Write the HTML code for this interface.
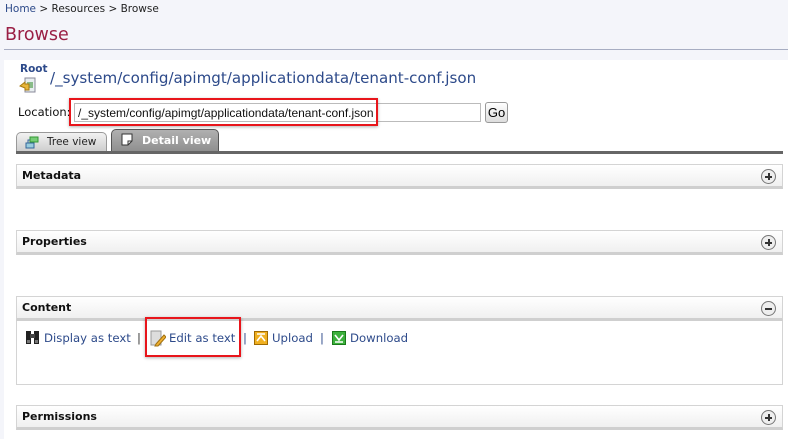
<!DOCTYPE html>
<html><head><meta charset="utf-8"><style>
*{margin:0;padding:0;box-sizing:border-box}
body{width:788px;height:439px;overflow:hidden;background:#f4f5fa;font-family:"DejaVu Sans","Liberation Sans",sans-serif;position:relative}
.a{position:absolute;white-space:nowrap}
.hd{position:absolute;left:16px;width:767px;height:25px;border:1px solid #d4d4d4;background:linear-gradient(#fff,#f0f0f0);border-bottom:3px solid #cfcfcf}
.hd b{position:absolute;left:5px;top:4px;font-size:11px;color:#111}
.pm{position:absolute;right:6px;top:4px;width:15px;height:15px;border:1px solid #777;border-radius:50%;background:#eee}
.pm:before{content:"";position:absolute;left:3px;top:6px;width:7px;height:2px;background:#333}
.pm.p:after{content:"";position:absolute;left:6px;top:3px;width:2px;height:7px;background:#333}
.lk{color:#2d4a8a;font-size:11.7px}
</style></head><body>
<div class="a" style="left:5px;top:3px;font-size:10.5px;color:#222"><span style="color:#2d4a8a">Home</span> &gt; Resources &gt; Browse</div>
<div class="a" style="left:5px;top:25px;font-size:17.5px;color:#9a1f45">Browse</div>
<div class="a" style="left:4px;top:49px;width:784px;height:1px;background:#a7adc2"></div>
<div class="a" style="left:4px;top:60px;width:784px;height:379px;background:#fff"></div>
<div class="a" style="left:20px;top:63px;font-size:10.5px;font-weight:bold;color:#2d4a8a">Root</div>
<svg class="a" style="left:19px;top:77px" width="17" height="17"><rect x="6" y="1" width="10" height="14" fill="#e8eef0" stroke="#889"/><rect x="8" y="5" width="6" height="6" fill="#8b8"/><path d="M1 9 L6 5 L6 7 L10 7 L10 13 L6 13 L6 11 Z" fill="#e8b73a" stroke="#a77a10"/></svg>
<div class="a" style="left:50px;top:69px;font-size:15.1px;color:#2d4a8a">/_system/config/apimgt/applicationdata/tenant-conf.json</div>
<div class="a" style="left:18px;top:105px;font-size:11.5px;color:#111">Location:</div>
<div class="a" style="left:74px;top:103px;width:407px;height:19px;border:1px solid #bbb;background:#fff"></div>
<div class="a" style="left:78px;top:106px;font-family:'Liberation Sans',sans-serif;font-size:12px;color:#111">/_system/config/apimgt/applicationdata/tenant-conf.json</div>
<div class="a" style="left:69px;top:98px;width:309px;height:28px;border:2px solid #e8151b;box-shadow:0 1px 3px rgba(0,0,0,.3)"></div>
<div class="a" style="left:485px;top:102px;width:23px;height:21px;border:1px solid #999;border-radius:3px;background:linear-gradient(#fff,#ddd);font-family:'Liberation Sans',sans-serif;font-size:13px;text-align:center;line-height:19px">Go</div>
<div class="a" style="left:16px;top:132px;width:91px;height:20px;border:1px solid #999;border-bottom:none;border-radius:5px 5px 0 0;background:linear-gradient(#f2f2f2,#ccc)"></div>
<svg class="a" style="left:25px;top:136px" width="15" height="13"><rect x="5" y="1" width="8" height="5" fill="#7c7" stroke="#393"/><rect x="1" y="7" width="8" height="5" fill="#9cd" stroke="#369"/><path d="M3 7 V4 H5" stroke="#369" fill="none"/></svg>
<div class="a" style="left:47px;top:136px;font-size:10.5px;color:#222">Tree view</div>
<div class="a" style="left:111px;top:129px;width:108px;height:23px;border:1px solid #555;border-bottom:none;border-radius:5px 5px 0 0;background:linear-gradient(#b0b0b0,#8e8e8e)"></div>
<svg class="a" style="left:121px;top:133px" width="12" height="13"><path d="M1 1 H11 V8 L7 12 H1 Z" fill="#fff" stroke="#333"/><path d="M7 12 V8 H11" fill="none" stroke="#333"/></svg>
<div class="a" style="left:142px;top:134px;font-size:11px;font-weight:bold;color:#fff">Detail view</div>
<div class="a" style="left:16px;top:151px;width:767px;height:3px;background:#666"></div>
<div class="hd" style="top:164px"><b>Metadata</b><span class="pm p"></span></div>
<div class="hd" style="top:230px"><b>Properties</b><span class="pm p"></span></div>
<div class="a" style="left:16px;top:296px;width:767px;height:89px;border:1px solid #d4d4d4"></div>
<div class="hd" style="top:296px"><b>Content</b><span class="pm"></span></div>
<svg class="a" style="left:25px;top:330px" width="15" height="15"><rect x="1" y="1" width="5" height="13" fill="#222"/><rect x="9" y="1" width="5" height="13" fill="#222"/><rect x="5" y="4" width="5" height="4" fill="#444"/><rect x="2" y="10" width="3" height="3" fill="#777"/><rect x="10" y="10" width="3" height="3" fill="#777"/></svg>
<div class="a lk" style="left:44px;top:331px">Display as text</div>
<div class="a lk" style="left:137px;top:331px;color:#333">|</div>
<svg class="a" style="left:150px;top:330px" width="16" height="17"><rect x="1" y="1" width="10" height="14" fill="#ddd" stroke="#999"/><path d="M6 14 L14 5 L16 7 L8 16 L5 16 Z" fill="#f0b030" stroke="#a07010"/></svg>
<div class="a lk" style="left:169px;top:331px">Edit as text</div>
<div class="a" style="left:145px;top:317px;width:96px;height:40px;border:2px solid #e8151b;box-shadow:0 1px 3px rgba(0,0,0,.3)"></div>
<div class="a lk" style="left:243px;top:331px">|</div>
<svg class="a" style="left:254px;top:331px" width="14" height="14"><rect x="0.5" y="0.5" width="13" height="13" fill="#f0b020" stroke="#a06a00"/><path d="M3 3 H11 M3 10 L7 5 L11 10" stroke="#fff" stroke-width="1.6" fill="none"/></svg>
<div class="a lk" style="left:272px;top:331px">Upload</div>
<div class="a lk" style="left:320px;top:331px">|</div>
<svg class="a" style="left:332px;top:331px" width="14" height="14"><rect x="0.5" y="0.5" width="13" height="13" fill="#3cb03c" stroke="#1a7a1a"/><path d="M3 4 L7 9 L11 4 M3 11 H11" stroke="#fff" stroke-width="1.6" fill="none"/></svg>
<div class="a lk" style="left:350px;top:331px">Download</div>
<div class="hd" style="top:405px"><b>Permissions</b><span class="pm p"></span></div>
</body></html>
